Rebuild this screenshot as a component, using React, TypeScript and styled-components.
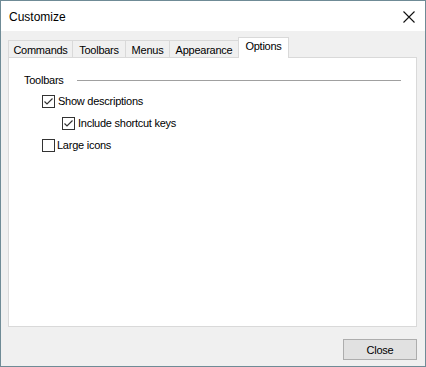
import React from 'react';
import styled, { createGlobalStyle } from 'styled-components';

const GlobalStyle = createGlobalStyle`
  html, body {
    margin: 0;
    padding: 0;
    background: #ffffff;
  }
  * {
    box-sizing: border-box;
  }
`;

const tabs = [
  { name: 'Commands', width: 64 },
  { name: 'Toolbars', width: 53 },
  { name: 'Menus', width: 44 },
  { name: 'Appearance', width: 69 },
  { name: 'Options', width: 51 },
];

const CheckMark: React.FC = () => (
  <svg width="11" height="11" viewBox="0 0 11 11">
    <path d="M1.5 5.5 L4 8 L9.5 2.5" fill="none" stroke="#333333" strokeWidth="1.2" />
  </svg>
);

interface CheckProps {
  label: string;
  checked?: boolean;
  indent?: number;
  gap?: number;
}

const Check: React.FC<CheckProps> = ({ label, checked, indent = 0, gap = 3 }) => (
  <CheckRow indent={indent}>
    <Box>{checked && <CheckMark />}</Box>
    <CheckLabel gap={gap}>{label}</CheckLabel>
  </CheckRow>
);

const App: React.FC = () => (
  <>
    <GlobalStyle />
    <Window>
      <TitleBar>
        <Title>Customize</Title>
        <CloseX>
          <svg width="12" height="12" viewBox="0 0 12 12">
            <path d="M0.5 0.5 L11.5 11.5 M11.5 0.5 L0.5 11.5" stroke="#111111" strokeWidth="1.1" />
          </svg>
        </CloseX>
      </TitleBar>
      <Body>
        <TabStrip>
          {tabs.map((t) => (
            <Tab key={t.name} width={t.width} active={t.name === 'Options'}>
              {t.name}
            </Tab>
          ))}
        </TabStrip>
        <Panel>
          <GroupHeader>
            <GroupTitle>Toolbars</GroupTitle>
            <GroupLine />
          </GroupHeader>
          <Options>
            <Check label="Show descriptions" checked />
            <Check label="Include shortcut keys" checked indent={20} gap={3} />
            <Check label="Large icons" gap={2} />
          </Options>
        </Panel>
        <Footer>
          <Button>Close</Button>
        </Footer>
      </Body>
    </Window>
  </>
);

export default App;

const Window = styled.div`
  width: 426px;
  height: 367px;
  border: 1px solid #6f8b96;
  display: flex;
  flex-direction: column;
  font-family: 'Liberation Sans', Arial, sans-serif;
  font-size: 11px;
  letter-spacing: -0.25px;
  color: #000000;
  background: #f0f0f0;
`;

const TitleBar = styled.div`
  height: 30px;
  background: #ffffff;
  display: flex;
  align-items: center;
  justify-content: space-between;
  padding: 0 10px 0 8px;
`;

const Title = styled.div`
  font-size: 12px;
  letter-spacing: 0;
  color: #000000;
  padding-top: 1px;
`;

const CloseX = styled.div`
  display: flex;
  align-items: center;
  padding-top: 1px;
`;

const Body = styled.div`
  flex: 1;
  display: flex;
  flex-direction: column;
  padding: 7px 8px 0 7px;
`;

const TabStrip = styled.div`
  display: flex;
  align-items: flex-end;
  height: 20px;
  margin-bottom: -1px;
  position: relative;
  z-index: 1;
`;

const Tab = styled.div<{ active?: boolean; width: number }>`
  width: ${({ width }) => width}px;
  height: ${({ active }) => (active ? '21px' : '18px')};
  padding-top: ${({ active }) => (active ? '1px' : '2px')};
  border: 1px solid #d9d9d9;
  border-right: ${({ active }) => (active ? '1px solid #d9d9d9' : 'none')};
  border-bottom: ${({ active }) => (active ? 'none' : '1px solid #d9d9d9')};
  background: ${({ active }) => (active ? '#ffffff' : '#f0f0f0')};
  color: #000000;
  text-align: center;
  white-space: nowrap;
  line-height: 14px;
`;

const Panel = styled.div`
  width: 409px;
  height: 270px;
  background: #ffffff;
  border: 1px solid #d9d9d9;
  padding: 15px 0 0 15px;
`;

const GroupHeader = styled.div`
  display: flex;
  align-items: center;
  height: 14px;
`;

const GroupTitle = styled.div`
  width: 53px;
  line-height: 14px;
`;

const GroupLine = styled.div`
  width: 324px;
  height: 1px;
  background: #a0a0a0;
  margin-top: 1px;
`;

const Options = styled.div`
  display: flex;
  flex-direction: column;
  gap: 8px;
  padding: 7px 0 0 18px;
`;

const CheckRow = styled.div<{ indent: number }>`
  display: flex;
  align-items: center;
  height: 14px;
  margin-left: ${({ indent }) => indent}px;
`;

const Box = styled.div`
  width: 13px;
  height: 13px;
  border: 1px solid #333333;
  background: #ffffff;
  display: flex;
  align-items: center;
  justify-content: center;
  flex-shrink: 0;
`;

const CheckLabel = styled.span<{ gap: number }>`
  margin-left: ${({ gap }) => gap}px;
  line-height: 14px;
`;

const Footer = styled.div`
  display: flex;
  justify-content: flex-end;
  padding: 12px 0 0 0;
`;

const Button = styled.button`
  width: 74px;
  height: 21px;
  border: 1px solid #adadad;
  background: #e1e1e1;
  font-family: 'Liberation Sans', Arial, sans-serif;
  font-size: 11px;
  letter-spacing: -0.25px;
  color: #000000;
  padding: 0;
`;
